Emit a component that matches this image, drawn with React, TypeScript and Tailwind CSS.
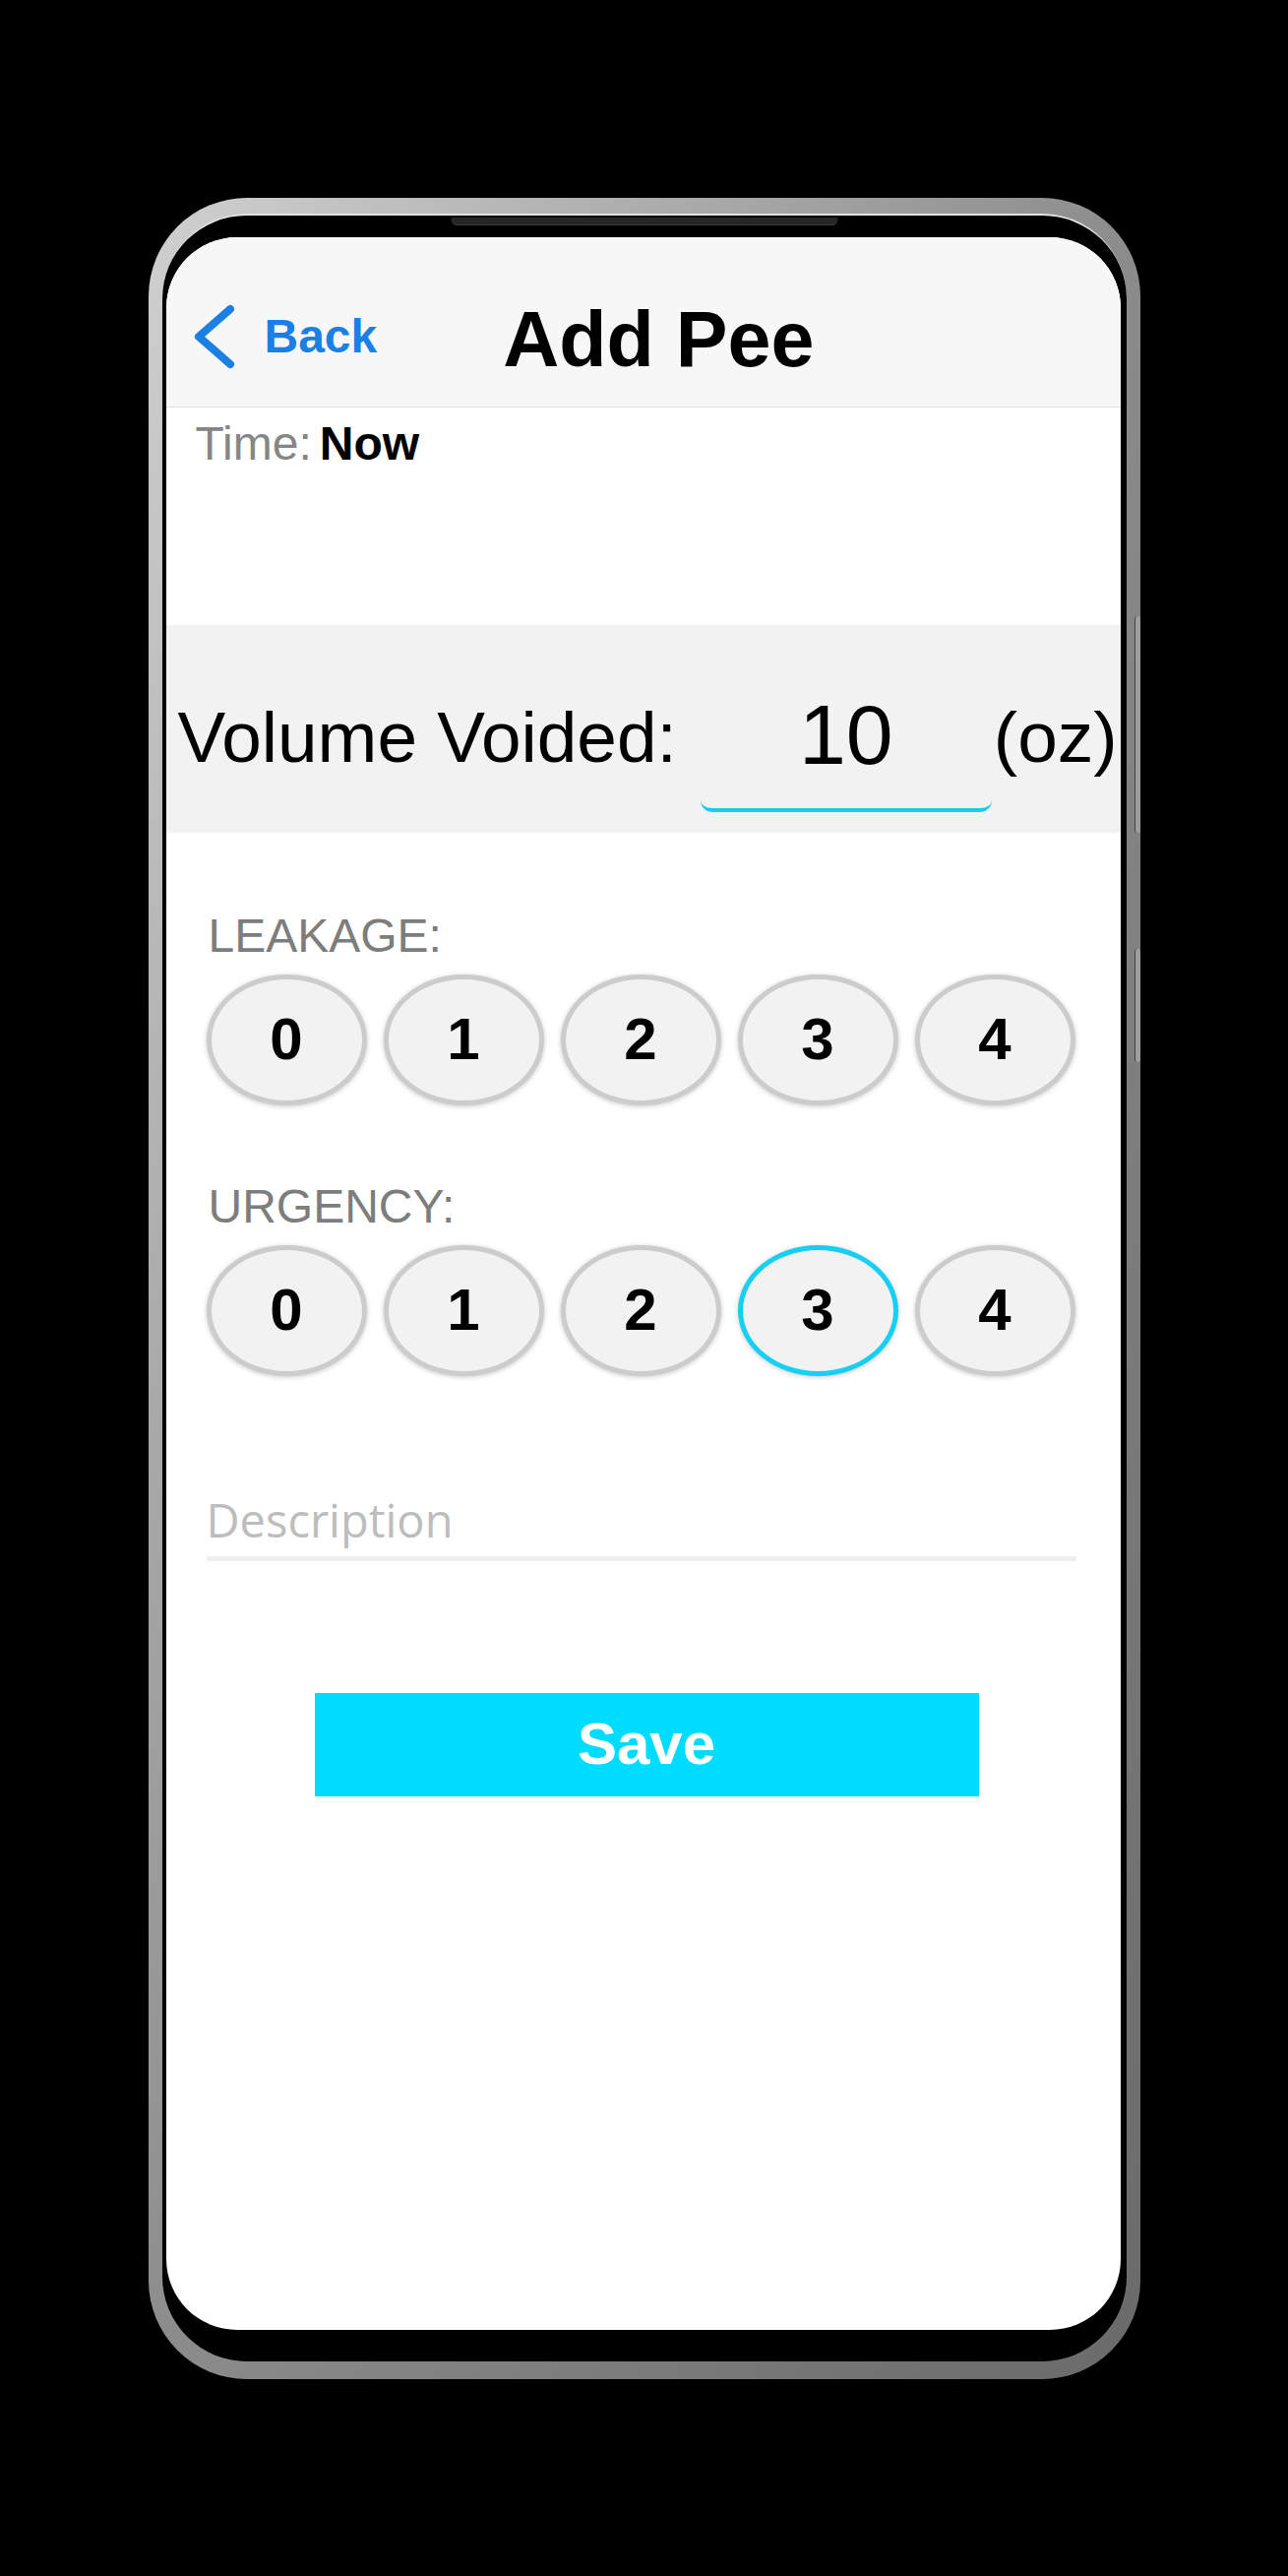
import React, { useState } from 'react';

const ratingValues = [0, 1, 2, 3, 4];

const sans = { fontFamily: '"Liberation Sans", Arial, sans-serif' };

interface RatingRowProps {
  label: string;
  value: number | null;
  onChange: (v: number) => void;
  labelClass: string;
}

const RatingRow: React.FC<RatingRowProps> = ({ label, value, onChange, labelClass }) => (
  <div className={labelClass}>
    <div className="ml-[2px] text-[48px] leading-[55px] text-[#7d7d7d]">{label}</div>
    <div className="mt-[12px] flex gap-[17px]">
      {ratingValues.map((n) => (
        <button
          key={n}
          onClick={() => onChange(n)}
          className={
            value === n
              ? 'w-[163px] h-[133px] rounded-[50%] bg-[#f2f2f2] border-[5px] border-[#17cff2] shadow-[0_1px_5px_rgba(0,0,0,0.22)] flex items-center justify-center'
              : 'w-[163px] h-[133px] rounded-[50%] bg-[#f2f2f2] border-[5px] border-[#cccccc] shadow-[0_1px_5px_rgba(0,0,0,0.22)] flex items-center justify-center'
          }
        >
          <span className="text-[60px] font-bold leading-none text-black">{n}</span>
        </button>
      ))}
    </div>
  </div>
);

export default function App() {
  const [leakage, setLeakage] = useState<number | null>(null);
  const [urgency, setUrgency] = useState<number | null>(3);

  return (
    <div className="w-[1309px] h-[2617px] bg-black flex items-center justify-center" style={sans}>
      {/* phone body */}
      <div className="relative w-[1008px] h-[2216px] rounded-[100px] bg-gradient-to-br from-[#d0d0d0] via-[#8c8c8c] to-[#6a6a6a] pt-[16px] pl-[14px] pr-[14px] pb-[18px]">
        <div className="absolute right-0 top-[425px] w-[6px] h-[220px] rounded-[3px] bg-[#9d9d9d] border-l border-[#444]" />
        <div className="absolute right-0 top-[763px] w-[6px] h-[115px] rounded-[3px] bg-[#9d9d9d] border-l border-[#444]" />

        <div className="relative h-full rounded-[86px] bg-black border-t-2 border-[#e2e2e2] pt-[22px] pl-[4px] pr-[6px] pb-[32px]">
          <div className="absolute top-[2px] left-1/2 -translate-x-1/2 w-[393px] h-[8px] rounded-b-[6px] bg-[#262626] border-b border-[#3a3a3a]" />

          {/* screen */}
          <div className="h-full rounded-[72px] bg-white overflow-hidden flex flex-col">
            {/* nav bar */}
            <div className="h-[173px] shrink-0 bg-[#f7f7f7] border-b border-[#e2e2e2] flex items-center pt-[30px]">
              <button className="flex items-center ml-[25px]">
                <svg width="46" height="66" viewBox="0 0 46 66" fill="none">
                  <polyline
                    points="40,5 8,33 40,61"
                    stroke="#1b7fe3"
                    strokeWidth="8"
                    strokeLinecap="round"
                    strokeLinejoin="round"
                  />
                </svg>
                <span className="ml-[29px] text-[48px] font-bold leading-none text-[#1b7fe3]">Back</span>
              </button>
              <h1 className="ml-[128px] mt-[6px] text-[79px] font-bold leading-none text-black">Add Pee</h1>
            </div>

            {/* time */}
            <div className="h-[221px] shrink-0 pt-[9px] px-[30px] flex items-start text-[48px] leading-[55px]">
              <span className="text-[#868686]">Time:</span>
              <span className="ml-[8px] font-bold text-black">Now</span>
            </div>

            {/* volume */}
            <div className="h-[211px] shrink-0 bg-[#f2f2f2] pt-[69px] pl-[12px] flex items-start">
              <span className="mt-[3px] text-[73px] leading-[83px] text-black">Volume Voided:</span>
              <div className="ml-[24px] w-[296px] pb-[33px] border-b-[4px] border-[#1ec9ef] rounded-b-[12px] flex justify-center">
                <span className="text-[86px] leading-[84px] text-black">10</span>
              </div>
              <span className="ml-[2px] mt-[3px] text-[73px] leading-[83px] text-black">(oz)</span>
            </div>

            {/* ratings */}
            <div className="pl-[41px]">
              <RatingRow label="LEAKAGE:" value={leakage} onChange={setLeakage} labelClass="mt-[77px]" />
              <RatingRow label="URGENCY:" value={urgency} onChange={setUrgency} labelClass="mt-[75px]" />
            </div>

            {/* description */}
            <div className="mt-[114px] ml-[41px] w-[884px] pb-[5px] border-b-[5px] border-[#eeeeee]">
              <span
                className="text-[47px] leading-[64px] text-[#bdbdbd]"
                style={{ fontFamily: '"Open Sans", "Noto Sans", sans-serif' }}
              >
                Description
              </span>
            </div>

            {/* save */}
            <button className="mt-[134px] ml-[151px] w-[675px] h-[105px] bg-[#00dcff] flex items-center justify-center">
              <span className="text-[60px] font-bold leading-none text-white">Save</span>
            </button>
          </div>
        </div>
      </div>
    </div>
  );
}
